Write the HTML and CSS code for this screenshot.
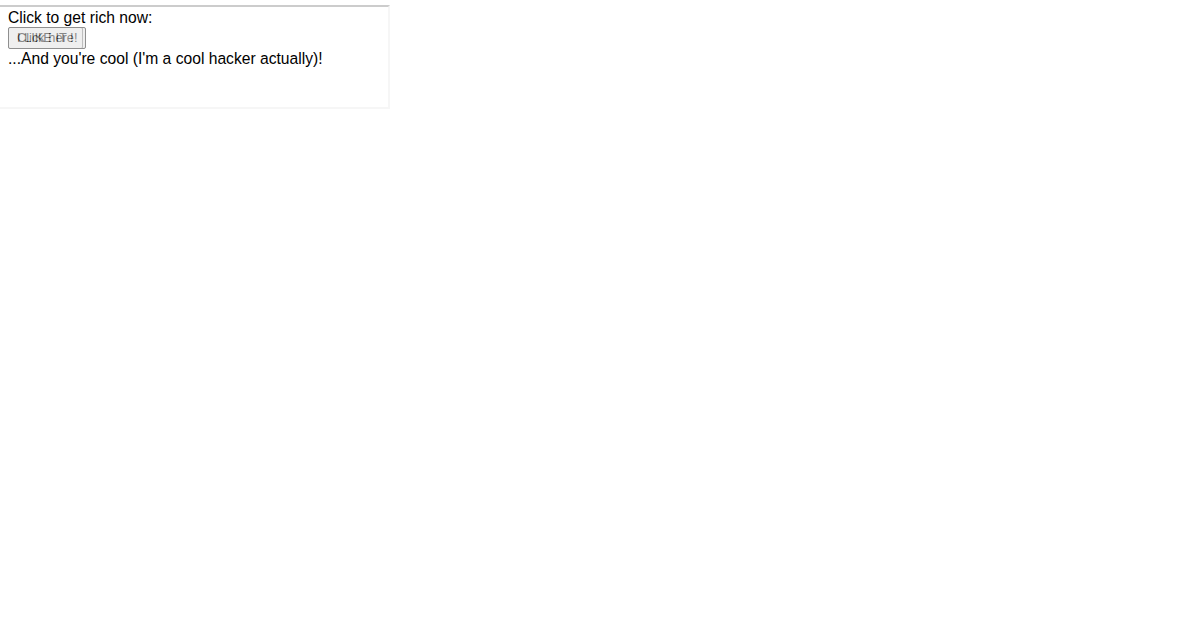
FILE: index.html
```html
<!DOCTYPE html>
<html>
<head>
<meta charset="utf-8">
<link rel="stylesheet" href="styles.css">
</head>
<body>
<div class="line">Click to get rich now:</div>
<div class="frame"><div class="frame-body"><input type="button" class="btn" value="I LIKE IT !"></div></div>
<button class="btn">Click here!</button>
<div class="line">...And you're cool (I'm a cool hacker actually)!</div>
</body>
</html>
```

FILE: styles.css
```css
body {
  margin: 8px;
  font-family: "Liberation Sans", Arial, sans-serif;
  font-size: 15.65px;
  line-height: 19px;
  color: #000;
  background: #fff;
}
.line {
  height: 19px;
}
.frame {
  position: absolute;
  top: 5px;
  left: -14px;
  width: 400px;
  height: 100px;
  border: 2px inset #eee;
  opacity: 0.5;
  z-index: 1;
  overflow: hidden;
  background: transparent;
}
.frame-body {
  margin: 10px;
  padding: 10px;
}
.btn {
  display: block;
  box-sizing: border-box;
  height: 22px;
  margin: 0;
  padding: 0 8px;
  font-family: "Liberation Sans", Arial, sans-serif;
  font-size: 12.8px;
  line-height: 20px;
  color: #222;
  background: #efefef;
  border: 1px solid #8f8f8f;
  border-radius: 2px;
}
```
